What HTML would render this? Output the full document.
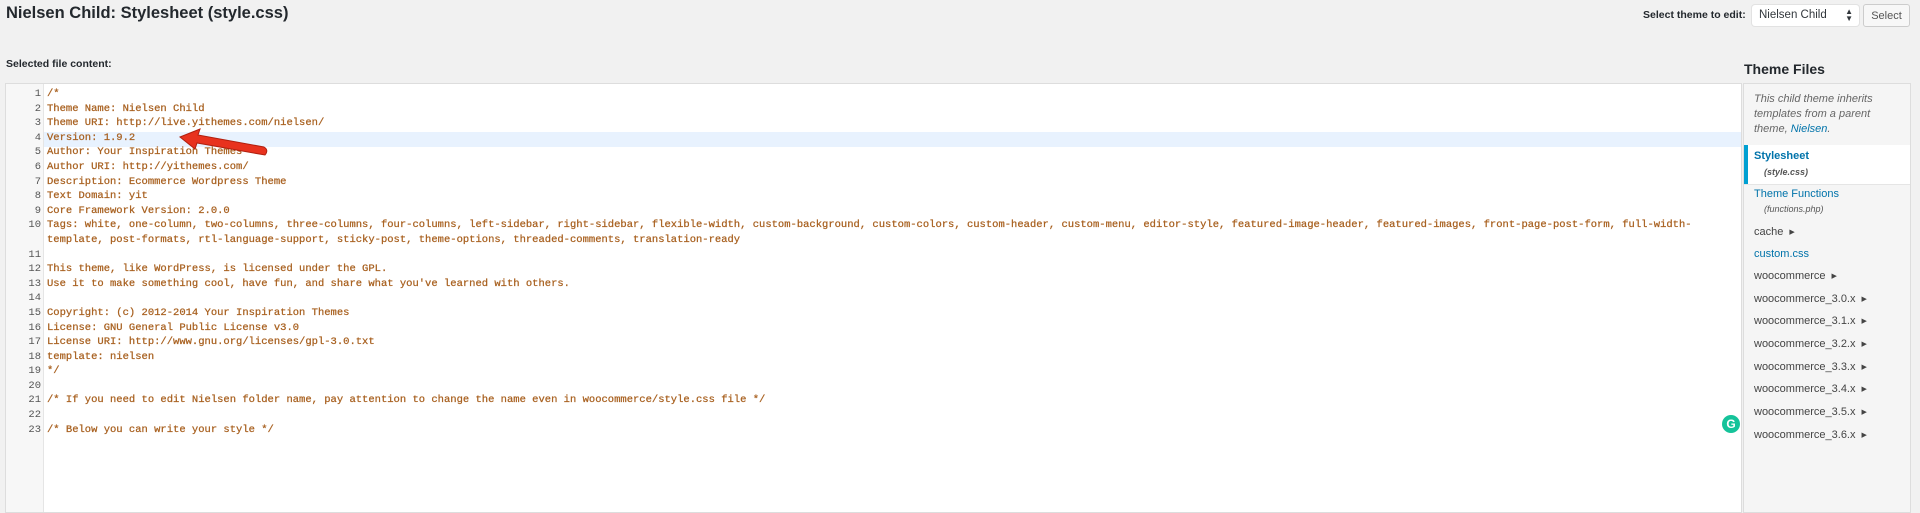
<!DOCTYPE html>
<html><head><meta charset="utf-8"><style>
body{margin:0;width:1920px;height:498px;background:#f1f1f1;font-family:"Liberation Sans",sans-serif;position:relative;overflow:hidden;color:#23282d}
.a{position:absolute;white-space:nowrap}
#ed{position:absolute;left:5px;top:83px;width:1737px;height:430px;background:#fff;border:1px solid #ddd;box-sizing:border-box}
#gut{position:absolute;left:0;top:0;width:37px;height:100%;background:#f7f7f7;border-right:1px solid #e5e5e5}
.ln{position:absolute;left:0;width:35px;text-align:right;font:10.5px/14.6px "Liberation Mono",monospace;color:#555}
.cd{position:absolute;left:41px;font:10.5px/14.6px "Liberation Mono",monospace;color:#a8601f;white-space:pre;-webkit-text-stroke:0.25px #a8601f}
#side{position:absolute;left:1743px;top:83px;width:168px;height:430px;background:#f5f5f5;border:1px solid #ddd;box-sizing:border-box}
.si{position:absolute;left:10px;font-size:11px;color:#444;white-space:nowrap}
.tri{font-size:7px;margin-left:6px;vertical-align:1px}
</style></head><body>
<div class="a" style="left:6px;top:4px;font-size:16.5px;font-weight:bold;color:#23282d">Nielsen Child: Stylesheet (style.css)</div>
<div class="a" style="left:6px;top:58px;font-size:10.5px;font-weight:bold;color:#23282d">Selected file content:</div>
<div class="a" style="left:1643px;top:9px;font-size:10.5px;font-weight:bold">Select theme to edit:</div>
<div class="a" style="left:1752px;top:5px;width:107px;height:21px;background:#fff;border-radius:3px;box-shadow:0 0 0 1px #e2e2e2;box-sizing:border-box;padding:4px 0 0 7px;font-size:11.5px;color:#32373c">Nielsen Child<span style="position:absolute;right:6px;top:3px;font-size:8px;line-height:7px">▲<br>▼</span></div>
<div class="a" style="left:1863px;top:4px;width:47px;height:23px;background:#f7f7f7;border:1px solid #ccc;border-radius:3px;box-sizing:border-box;text-align:center;padding-top:5px;font-size:11px;color:#555">Select</div>
<div class="a" style="left:1744px;top:61px;font-size:14px;font-weight:bold;color:#23282d">Theme Files</div>
<div id="ed"><div id="gut"></div>
<div style="position:absolute;left:38px;right:0;top:48px;height:15px;background:#e8f2fe"></div>
<div class="ln" style="top:3px">1<br>2<br>3<br>4<br>5<br>6<br>7<br>8<br>9<br>10<br><br>11<br>12<br>13<br>14<br>15<br>16<br>17<br>18<br>19<br>20<br>21<br>22<br>23</div>
<div class="cd" style="top:3px">/*
Theme Name: Nielsen Child
Theme URI: http://live.yithemes.com/nielsen/
Version: 1.9.2
Author: Your Inspiration Themes
Author URI: http://yithemes.com/
Description: Ecommerce Wordpress Theme
Text Domain: yit
Core Framework Version: 2.0.0
Tags: white, one-column, two-columns, three-columns, four-columns, left-sidebar, right-sidebar, flexible-width, custom-background, custom-colors, custom-header, custom-menu, editor-style, featured-image-header, featured-images, front-page-post-form, full-width-
template, post-formats, rtl-language-support, sticky-post, theme-options, threaded-comments, translation-ready

This theme, like WordPress, is licensed under the GPL.
Use it to make something cool, have fun, and share what you've learned with others.

Copyright: (c) 2012-2014 Your Inspiration Themes
License: GNU General Public License v3.0
License URI: http://www.gnu.org/licenses/gpl-3.0.txt
template: nielsen
*/

/* If you need to edit Nielsen folder name, pay attention to change the name even in woocommerce/style.css file */

/* Below you can write your style */</div>
</div>
<svg class="a" style="left:170px;top:128px" width="100" height="32" viewBox="0 0 100 32"><path d="M10 9 L30 1 L28 7 L94 19 Q99 22 95 27 L27 15 L25 21 Z" fill="#e8321e" stroke="#b0200f" stroke-width="1"/></svg>
<div id="side">
<div class="si" style="top:8px;width:150px;font-style:italic;color:#666;white-space:normal;line-height:15px">This child theme inherits templates from a parent theme, <span style="color:#0073aa">Nielsen</span>.</div>
<div style="position:absolute;left:0;top:61px;width:166px;height:39px;background:#fff;border-left:4px solid #00a0d2;box-sizing:border-box"></div>
<div class="si" style="top:66px;color:#0073aa;font-weight:bold">Stylesheet</div>
<div class="si" style="top:83px;left:20px;font-size:9px;font-style:italic;font-weight:bold;color:#555">(style.css)</div>
<div style="position:absolute;left:0;top:100px;width:166px;height:1px;background:#e5e5e5"></div>
<div class="si" style="top:104px;color:#0073aa">Theme Functions</div>
<div class="si" style="top:120px;left:20px;font-size:9px;font-style:italic;color:#555">(functions.php)</div>
<div class="si" style="top:142px">cache<span class="tri">▶</span></div>
<div class="si" style="top:164px;color:#0073aa">custom.css</div>
<div class="si" style="top:186px">woocommerce<span class="tri">▶</span></div>
<div class="si" style="top:209px">woocommerce_3.0.x<span class="tri">▶</span></div>
<div class="si" style="top:231px">woocommerce_3.1.x<span class="tri">▶</span></div>
<div class="si" style="top:254px">woocommerce_3.2.x<span class="tri">▶</span></div>
<div class="si" style="top:277px">woocommerce_3.3.x<span class="tri">▶</span></div>
<div class="si" style="top:299px">woocommerce_3.4.x<span class="tri">▶</span></div>
<div class="si" style="top:322px">woocommerce_3.5.x<span class="tri">▶</span></div>
<div class="si" style="top:345px">woocommerce_3.6.x<span class="tri">▶</span></div>
</div>
<div class="a" style="left:1722px;top:415px;width:18px;height:18px;border-radius:50%;background:#15c39a;color:#fff;font-size:12px;font-weight:bold;text-align:center;line-height:18px">G</div>
</body></html>
